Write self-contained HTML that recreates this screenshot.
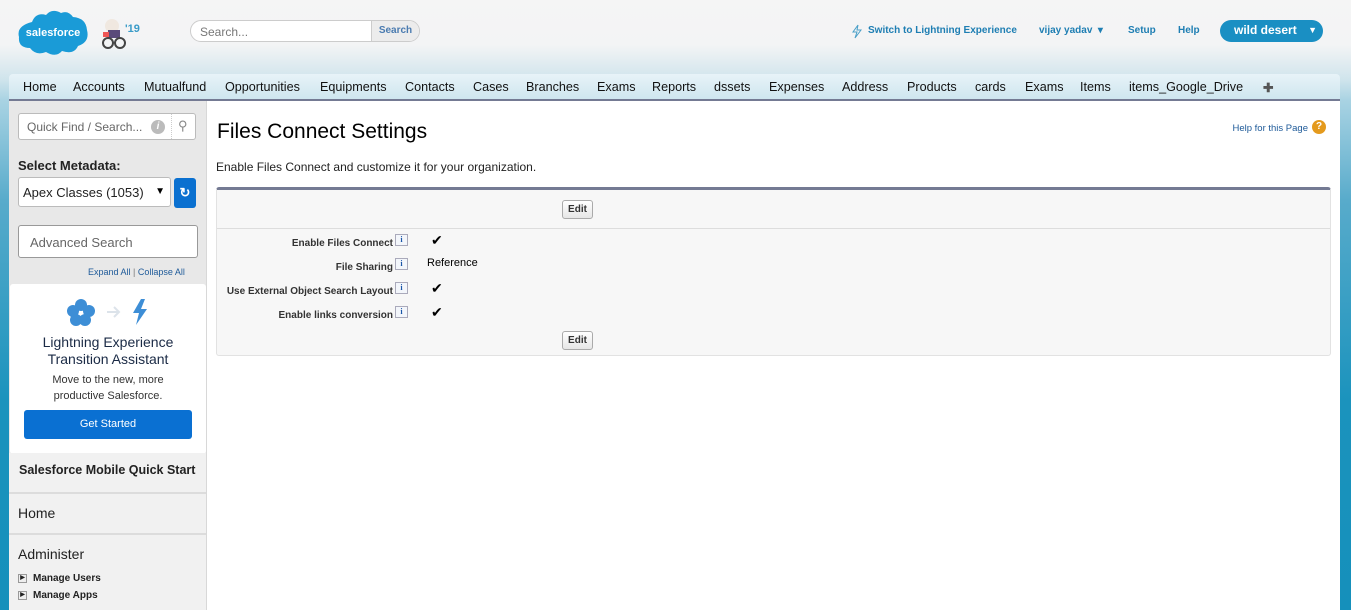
<!DOCTYPE html>
<html><head><meta charset="utf-8"><style>
*{box-sizing:border-box;margin:0;padding:0}
body{width:1351px;height:610px;overflow:hidden;font-family:"Liberation Sans",Arial,sans-serif;position:relative;
background:linear-gradient(180deg,#f5f5f5 0,#f3f4f5 45px,#cfe4ec 80px,#a9d3e3 100px,#58abcb 200px,#1b93bd 400px,#1590bb 610px);}
.abs{position:absolute}
.logo{left:16px;top:8px;width:74px;height:48px}
.search{left:190px;top:20px;width:230px;height:22px;border:1px solid #ccc;border-radius:11px;background:#fff;overflow:hidden}
.search .t{position:absolute;left:9px;top:4px;font-size:12px;color:#777}
.search .b{position:absolute;right:0;top:0;width:48px;height:20px;background:#ececec;border-left:1px solid #ccc;font-size:10px;font-weight:bold;color:#4a7bb0;text-align:center;line-height:20px}
.top a{position:absolute;top:25px;font-size:10px;font-weight:bold;color:#1e7eb3;text-decoration:none}
.org{left:1220px;top:20px;width:103px;height:22px;border-radius:11px;background:#1a8fc3;color:#fff;font-weight:bold;font-size:12px;line-height:20px;padding-left:14px}
.tabs{left:9px;top:74px;width:1331px;height:27px;border-radius:4px 4px 0 0;background:linear-gradient(#e8f3f8,#cfe6ef);border-bottom:2px solid #747a93}
.tabs span{position:absolute;top:6px;font-size:12.6px;color:#111}
.side{left:9px;top:101px;width:198px;height:509px;background:#e8e8e8;border-right:1px solid #d8d8d8}
.main{left:207px;top:101px;width:1133px;height:509px;background:#fff}
.box{position:absolute;border:1px solid #bbb;background:#fff;border-radius:3px}
.lbl{position:absolute;font-size:10px;font-weight:bold;color:#333;text-align:right;white-space:nowrap}
.ib{position:absolute;left:395px;width:13px;height:12px;border:1px solid #aab;background:#f3f6fb;font-size:8px;color:#1a56a8;text-align:center;line-height:10px;font-weight:bold;font-family:"Liberation Serif",serif}
.ck{position:absolute;left:431px;font-size:14px;color:#000}
.btn{position:absolute;left:562px;width:31px;height:19px;border:1px solid #aaa;border-radius:3px;background:linear-gradient(#fff,#e6e6e6);font-size:10px;font-weight:bold;text-align:center;line-height:17px;color:#333}
.sec{position:absolute;left:9px;width:197px;background:#f1f1f1;border-top:2px solid #dcdcdc}
.tri{display:inline-block;width:9px;height:9px;border:1px solid #999;background:#eee;font-size:6px;line-height:7px;text-align:center;vertical-align:middle;margin-right:6px}
</style></head><body>
<svg class="abs logo" viewBox="0 0 74 48"><path d="M16 14 Q20 4 30 7 Q36 0 45 5 Q52 2 57 9 Q70 10 71 22 Q74 34 62 38 Q58 47 46 43 Q40 50 30 44 Q20 48 14 40 Q2 40 3 29 Q0 18 16 14Z" fill="#1a9bd7"/><text x="37" y="28" font-size="11" fill="#fff" text-anchor="middle" font-family="Liberation Sans" font-weight="bold">salesforce</text></svg>
<svg class="abs" style="left:100px;top:12px" width="40" height="38"><circle cx="12" cy="14" r="7" fill="#f0e8e0"/><rect x="8" y="18" width="12" height="8" fill="#5a4a7a"/><circle cx="8" cy="31" r="5" fill="none" stroke="#444" stroke-width="2"/><circle cx="20" cy="31" r="5" fill="none" stroke="#444" stroke-width="2"/><rect x="3" y="20" width="6" height="5" fill="#e55"/><text x="25" y="20" font-size="11" fill="#3a9bc8" font-weight="bold" font-family="Liberation Sans">'19</text></svg>
<div class="abs search"><span class="t">Search...</span><span class="b">Search</span></div>
<div class="top">
<svg class="abs" style="left:851px;top:24px" width="12" height="15" viewBox="0 0 12 15"><path d="M7 1 L2 8 H6 L4 14 L10 6 H6 Z" fill="none" stroke="#4a9fc8" stroke-width="1"/></svg>
<a style="left:868px">Switch to Lightning Experience</a>
<a style="left:1039px">vijay yadav &nbsp;▾</a>
<a style="left:1128px">Setup</a>
<a style="left:1178px">Help</a>
</div>
<div class="abs org">wild desert <span style="position:absolute;right:6px;font-size:9px">▼</span></div>
<div class="abs tabs">
<span style="left:14px">Home</span><span style="left:64px">Accounts</span><span style="left:135px">Mutualfund</span><span style="left:216px">Opportunities</span><span style="left:311px">Equipments</span><span style="left:396px">Contacts</span><span style="left:464px">Cases</span><span style="left:517px">Branches</span><span style="left:588px">Exams</span><span style="left:643px">Reports</span><span style="left:705px">dssets</span><span style="left:760px">Expenses</span><span style="left:833px">Address</span><span style="left:898px">Products</span><span style="left:966px">cards</span><span style="left:1016px">Exams</span><span style="left:1071px">Items</span><span style="left:1120px">items_Google_Drive</span><span style="left:1254px;font-weight:bold;color:#555">✚</span>
</div>
<div class="abs side">
<div class="box" style="left:9px;top:12px;width:178px;height:27px"><span style="position:absolute;left:8px;top:6px;font-size:12px;color:#666">Quick Find / Search...</span><span style="position:absolute;left:132px;top:6px;width:14px;height:14px;border-radius:7px;background:#bbb;color:#fff;font-size:10px;text-align:center;line-height:14px;font-style:italic;font-weight:bold">i</span><span style="position:absolute;left:152px;top:0;height:25px;border-left:1px dotted #ccc;padding:4px 0 0 6px;font-size:13px;color:#888">⚲</span></div>
<div class="abs" style="left:9px;top:57px;font-size:13px;font-weight:bold;color:#222">Select Metadata:</div>
<div class="box" style="left:9px;top:76px;width:153px;height:30px"><span style="position:absolute;left:4px;top:7px;font-size:13px;color:#222">Apex Classes (1053)</span><span style="position:absolute;right:5px;top:8px;font-size:10px">▼</span></div>
<div class="abs" style="left:165px;top:77px;width:22px;height:30px;background:#0a70d0;border-radius:3px;color:#fff;font-size:13px;text-align:center;line-height:30px;font-weight:bold">↻</div>
<div class="box" style="left:9px;top:124px;width:180px;height:33px;border-color:#999"><span style="position:absolute;left:11px;top:9px;font-size:13px;color:#666">Advanced Search</span></div>
<div class="abs" style="left:79px;top:166px;font-size:9px;color:#1e5a99">Expand All <span style="color:#777">|</span> Collapse All</div>
<div class="abs" style="left:1px;top:183px;width:196px;height:170px;background:#fff;border-radius:3px">
<svg class="abs" style="left:56px;top:13px" width="90" height="30"><g fill="#3d8ed6"><circle cx="15" cy="8" r="6"/><circle cx="23" cy="14" r="6"/><circle cx="19" cy="23" r="6"/><circle cx="10" cy="23" r="6"/><circle cx="7" cy="14" r="6"/></g><circle cx="15" cy="16" r="2" fill="#fff"/><path d="M41 15 H53 M48 10 L53 15 L48 20" stroke="#dce3ea" stroke-width="2" fill="none"/><path d="M75 2 L67 16 H73 L70 28 L81 12 H75 L79 2Z" fill="#3d8ed6"/></svg>
<div class="abs" style="left:0;width:196px;top:50px;text-align:center;font-size:14px;color:#1a2a45;line-height:17px">Lightning Experience<br>Transition Assistant</div>
<div class="abs" style="left:0;width:196px;top:88px;text-align:center;font-size:11px;color:#333;line-height:16px">Move to the new, more<br>productive Salesforce.</div>
<div class="abs" style="left:14px;top:126px;width:168px;height:29px;background:#0a70d2;border-radius:3px;color:#fff;font-size:11px;text-align:center;line-height:29px">Get Started</div>
</div>
</div>
<div class="sec" style="top:453px;height:39px;border-top:0"><span style="position:absolute;left:10px;top:10px;font-size:12.5px;font-weight:bold;color:#222">Salesforce Mobile Quick Start</span></div>
<div class="sec" style="top:492px;height:41px"><span style="position:absolute;left:9px;top:11px;font-size:14px;color:#222">Home</span></div>
<div class="sec" style="top:533px;height:77px"><span style="position:absolute;left:9px;top:11px;font-size:14px;color:#222">Administer</span>
<span style="position:absolute;left:9px;top:38px;font-size:10px;font-weight:bold;color:#222"><span class="tri">▶</span>Manage Users</span>
<span style="position:absolute;left:9px;top:55px;font-size:10px;font-weight:bold;color:#222"><span class="tri">▶</span>Manage Apps</span></div>
<div class="abs main">
<div class="abs" style="left:10px;top:19px;font-size:21px;color:#000">Files Connect Settings</div>
<div class="abs" style="right:32px;top:22px;font-size:9.5px;color:#1e5a99">Help for this Page</div>
<div class="abs" style="right:14px;top:19px;width:14px;height:14px;border-radius:7px;background:#e49a1d;color:#fff;font-size:10px;font-weight:bold;text-align:center;line-height:14px">?</div>
<div class="abs" style="left:9px;top:59px;font-size:12px;color:#222">Enable Files Connect and customize it for your organization.</div>
</div>
<div class="abs" style="left:216px;top:187px;width:1115px;height:169px;background:#f7f7f7;border:1px solid #e2e2e2;border-top:3px solid #747a93;border-radius:3px">
<div class="abs" style="left:0;right:0;top:38px;border-top:1px solid #ddd"></div>
</div>
<div class="btn" style="top:200px">Edit</div>
<div class="btn" style="top:331px">Edit</div>
<div class="lbl" style="top:238px;right:958px">Enable Files Connect</div>
<div class="lbl" style="top:262px;right:958px">File Sharing</div>
<div class="lbl" style="top:286px;right:958px">Use External Object Search Layout</div>
<div class="lbl" style="top:310px;right:958px">Enable links conversion</div>
<div class="ib" style="top:234px">i</div><div class="ib" style="top:258px">i</div><div class="ib" style="top:282px">i</div><div class="ib" style="top:306px">i</div>
<div class="ck" style="top:232px">✔</div>
<div class="abs" style="left:427px;top:257px;font-size:11px;color:#000">Reference</div>
<div class="ck" style="top:280px">✔</div>
<div class="ck" style="top:304px">✔</div>
</body></html>
